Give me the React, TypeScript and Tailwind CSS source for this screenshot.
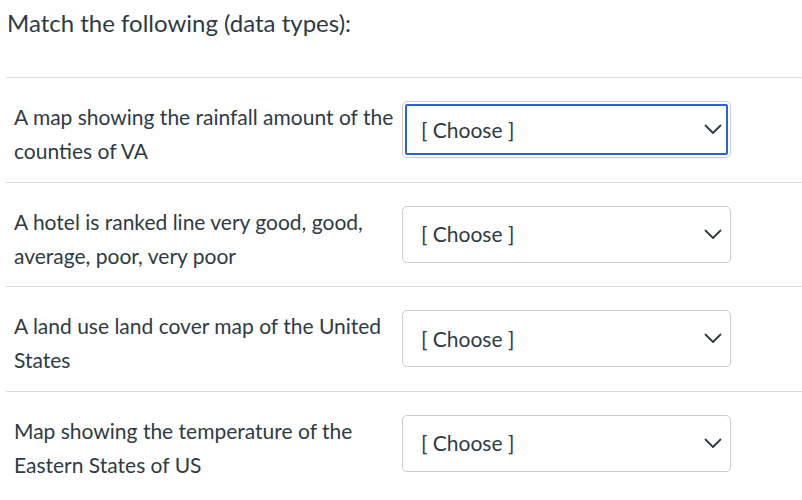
import React from "react";

const rows = [
  { label: "A map showing the rainfall amount of the counties of VA", focused: true },
  { label: "A hotel is ranked line very good, good, average, poor, very poor", focused: false },
  { label: "A land use land cover map of the United States", focused: false },
  { label: "Map showing the temperature of the Eastern States of US", focused: false },
];

function Chevron() {
  return (
    <svg width="18" height="11" viewBox="0 0 18 11" fill="none" className="shrink-0">
      <path d="M1.5 1.5 L9 9 L16.5 1.5" stroke="#2d3b45" strokeWidth="1.8" strokeLinecap="round" strokeLinejoin="round" />
    </svg>
  );
}

export default function App() {
  return (
    <div className="w-[802px] h-[500px] bg-white overflow-hidden text-[#2d3b45]" style={{ fontFamily: "Lato, 'Noto Sans', sans-serif" }}>
      <div className="h-[77px] pl-[7px] pt-[6px] text-[24px] leading-[34px]">Match the following (data types):</div>
      <div className="ml-[6px]">
        {rows.map((r, i) => (
          <div key={i} className="border-t border-[#dadde0] h-[104.5px] pt-[22px] flex">
            <div className="w-[396px] pl-[8px] pr-[2px] text-[21px] leading-[34px]">{r.label}</div>
            <div
              className={
                "mt-[1px] w-[329px] h-[57px] rounded-[5px] border border-[#c8cdd1] flex items-center justify-between pl-[18px] pr-[8px] text-[21px] " +
                (r.focused ? "outline-[2.5px] outline-solid outline-[#2c62d3] outline-offset-[-5px]" : "")
              }
            >
              <span>[ Choose ]</span>
              <Chevron />
            </div>
          </div>
        ))}
      </div>
    </div>
  );
}
